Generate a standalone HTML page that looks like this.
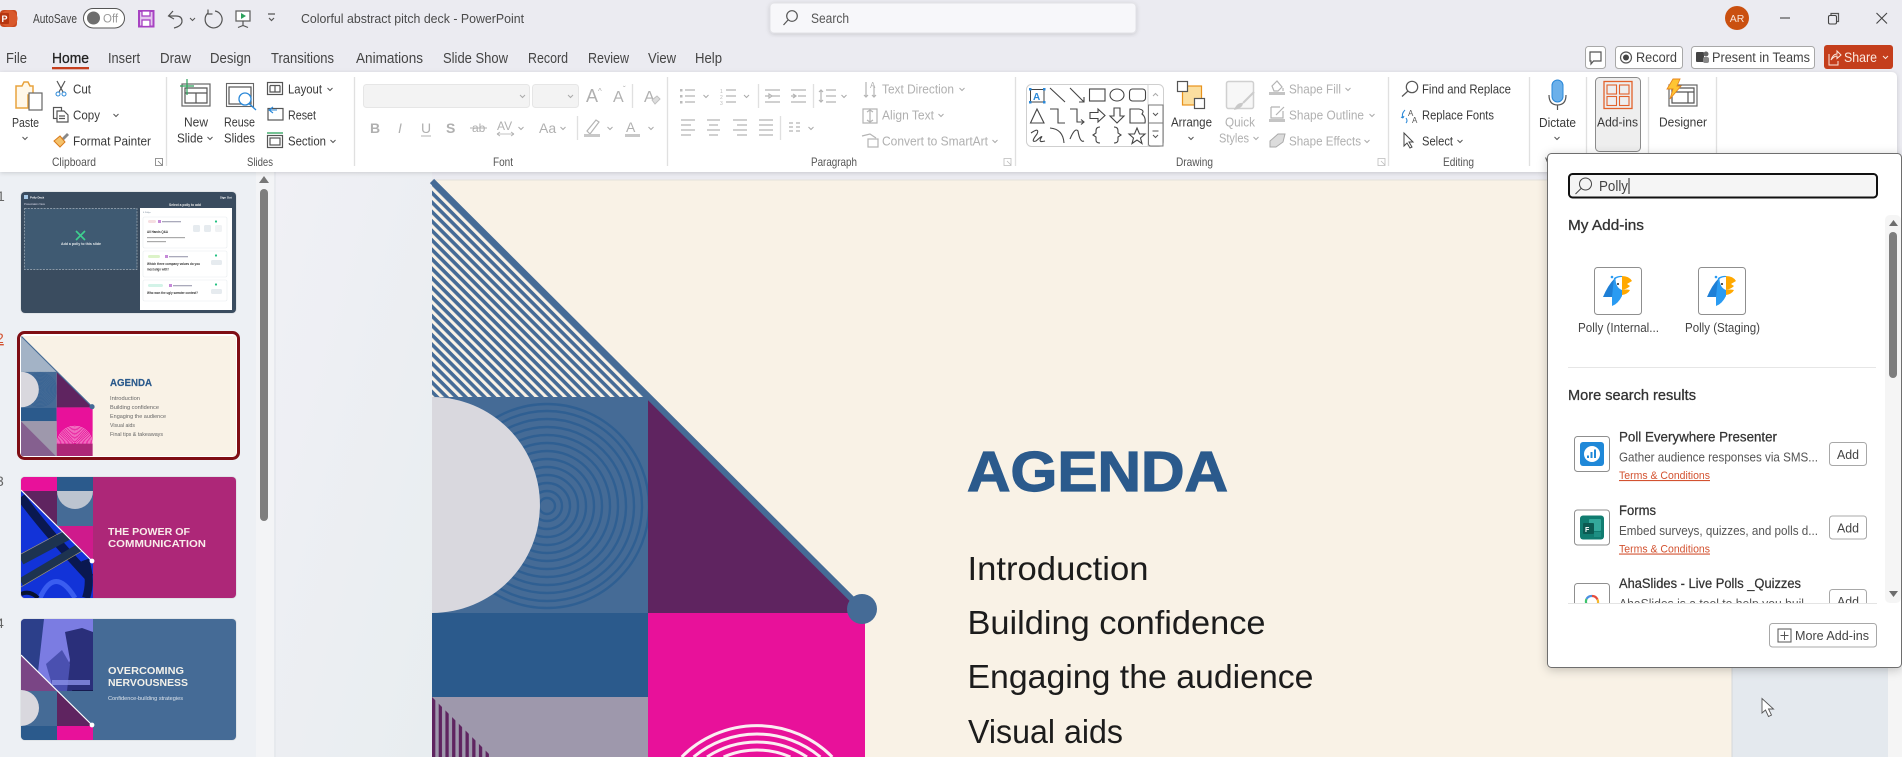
<!DOCTYPE html>
<html><head><meta charset="utf-8"><title>Colorful abstract pitch deck - PowerPoint</title>
<style>
html,body{margin:0;padding:0;width:1902px;height:757px;overflow:hidden;background:#ebebf1}
svg{display:block;font-family:"Liberation Sans",sans-serif}
.t{font-size:13px;fill:#3a3a3a}
.d{font-size:13px;fill:#b0b0b0}
.s{font-size:12px;fill:#555}
.tab{font-size:14.5px;fill:#444}
.i{fill:none;stroke:#555;stroke-width:1.2}
.g{fill:none;stroke:#b4b4b4;stroke-width:1.2}
.sh{fill:none;stroke:#444;stroke-width:1.1}
.ch{fill:none;stroke:#555;stroke-width:1}
.cg{fill:none;stroke:#aaa;stroke-width:1}
.sep{stroke:#e0e0e0;stroke-width:1.3}
.p{font-size:13px;fill:#444}
.pb{font-size:15px;fill:#333;stroke:#333;stroke-width:.3}
.rt{font-size:13.5px;fill:#333;stroke:#333;stroke-width:.25}
.btn{fill:#fff;stroke:#a8a8a8;stroke-width:1}
</style></head><body>
<svg width="1902" height="757" viewBox="0 0 1902 757" xmlns="http://www.w3.org/2000/svg">
<defs>
<linearGradient id="bgl" x1="0" x2="1" y1="0" y2="1"><stop offset="0" stop-color="#f0f0f5"/><stop offset="1" stop-color="#e8edf0"/></linearGradient>
<pattern id="hatch" patternUnits="userSpaceOnUse" width="6.7" height="6.7" patternTransform="rotate(45 432 181)"><rect width="6.7" height="6.7" fill="#f9f2e6"/><rect width="6.7" height="3.6" fill="#456b96"/></pattern>
<pattern id="vst" patternUnits="userSpaceOnUse" x="432" y="0" width="6.7" height="10"><rect width="6.7" height="10" fill="#9e98ac"/><rect width="3.3" height="10" fill="#5f2460"/></pattern>
<clipPath id="blueclip"><rect x="432" y="397" width="216" height="216"/></clipPath>
<clipPath id="magclip"><rect x="648" y="613" width="216" height="220"/></clipPath>
<clipPath id="th1"><rect x="21" y="192" width="215" height="121" rx="4"/></clipPath>
<clipPath id="th2"><rect x="21" y="336" width="215" height="120" rx="2"/></clipPath>
<clipPath id="th3"><rect x="21" y="477" width="215" height="121" rx="4"/></clipPath>
<clipPath id="th3i"><polygon points="21,490 93,561 93,598 21,598"/></clipPath>
<clipPath id="th4"><rect x="21" y="619" width="215" height="121" rx="4"/></clipPath>
<clipPath id="list"><rect x="1560" y="410" width="322" height="193"/></clipPath>
<filter id="sd" x="-10%" y="-10%" width="120%" height="120%"><feDropShadow dx="0" dy="2" stdDeviation="5" flood-color="#000" flood-opacity=".22"/></filter>
<filter id="sd2" x="-2%" y="-10%" width="104%" height="125%"><feDropShadow dx="0" dy="1" stdDeviation="2" flood-color="#000" flood-opacity=".15"/></filter>
<g id="art">
<polygon points="432,181 648,397 432,397" fill="url(#hatch)"/>
<rect x="432" y="397" width="216" height="216" fill="#456b96"/>
<g clip-path="url(#blueclip)" fill="none" stroke="#2f5f92" stroke-width="2.4">
<circle cx="547" cy="506" r="8"/><circle cx="547" cy="506" r="15"/><circle cx="547" cy="506" r="23"/><circle cx="547" cy="506" r="31"/><circle cx="547" cy="506" r="39"/><circle cx="547" cy="506" r="47"/><circle cx="547" cy="506" r="55"/><circle cx="547" cy="506" r="63"/><circle cx="547" cy="506" r="71"/><circle cx="547" cy="506" r="79"/><circle cx="547" cy="506" r="87"/><circle cx="547" cy="506" r="95"/><circle cx="547" cy="506" r="102"/>
</g>
<path d="M432 397A108 108 0 0 1 432 613Z" fill="#d9d8de"/>
<polygon points="648,397 862,611 648,613" fill="#5f2460"/>
<rect x="648" y="609" width="214" height="4" fill="#5f2460"/>
<rect x="432" y="613" width="216" height="84" fill="#2b5a8c"/>
<rect x="648" y="613" width="217" height="144" fill="#e8119a"/>
<rect x="432" y="697" width="216" height="60" fill="#9e98ac"/>
<polygon points="432,697 492,757 432,757" fill="url(#vst)"/>
<path d="M432 181L862 609" stroke="#456b96" stroke-width="6" fill="none"/>
<circle cx="862" cy="609" r="15" fill="#456b96"/>
</g>
<g id="art2">
<polygon points="432,181 648,397 432,397" fill="#a3b3c6"/>
<rect x="648" y="620" width="217" height="300" fill="#e8119a"/>
<g clip-path="url(#magclip)" fill="none" stroke="#f9cfe6" stroke-width="3">
<circle cx="757" cy="833" r="107"/><circle cx="757" cy="833" r="99"/><circle cx="757" cy="833" r="91"/><circle cx="757" cy="833" r="83"/><circle cx="757" cy="833" r="75"/><circle cx="757" cy="833" r="67"/><circle cx="757" cy="833" r="59"/><circle cx="757" cy="833" r="51"/><circle cx="757" cy="833" r="43"/><circle cx="757" cy="833" r="35"/><circle cx="757" cy="833" r="27"/><circle cx="757" cy="833" r="19"/><circle cx="757" cy="833" r="11"/>
</g>
<rect x="648" y="833" width="217" height="90" fill="#ad2778"/>
<rect x="432" y="697" width="216" height="226" fill="#9e98ac"/>
<polygon points="432,697 648,913 432,913" fill="#85608f"/>
<path d="M432 181L862 609" stroke="#456b96" stroke-width="6" fill="none"/>
<circle cx="862" cy="609" r="15" fill="#456b96"/>
</g>
<g id="parrot">
<path d="M0 22Q5 10 12 3L12 22L9 22Z" fill="#1e7fd6"/>
<path d="M11 3Q15 .5 19 1L19 21Q15 29 9 31L9 22Z" fill="#2a9bf2"/>
<path d="M12.500 4Q15 2 19 2L19 15Q13 13 12.500 4Z" fill="#fff"/>
<path d="M19 1Q26 1 29 6L24 9L27 11Q24 14 19 15Z" fill="#ffa800"/>
<path d="M19 15Q23 14 27 15Q25 19 19 20Z" fill="#ffa800"/>
<circle cx="9" cy="2" r="1.3" fill="#2a9bf2"/>
<circle cx="15" cy="9" r="1" fill="#222"/>
</g>
</defs>

<rect width="1902" height="757" fill="#ebebf1"/>

<!-- workspace -->
<rect x="0" y="172" width="256" height="585" fill="#edf0f4"/>
<rect x="256" y="172" width="18" height="585" fill="#f3f4f6"/>
<rect x="260" y="189" width="8" height="332" rx="4" fill="#7e7e7e"/>
<polygon points="264,176 259,183 269,183" fill="#777"/>
<rect x="274" y="172" width="158" height="585" fill="url(#bgl)"/>
<line x1="275" y1="172" x2="275" y2="757" stroke="#dfe3e8"/>
<rect x="432" y="180" width="1300" height="577" fill="#f9f2e6"/>
<rect x="1732" y="172" width="156" height="585" fill="#e4e9ee"/>
<rect x="1888" y="172" width="14" height="585" fill="#f5f5f5"/>
<line x1="432" y1="180" x2="1732" y2="180" stroke="#e4e1da"/>
<line x1="1732" y1="180" x2="1732" y2="757" stroke="#d5d8da"/>

<!-- main slide -->
<use href="#art"/>
<g fill="none" stroke="#fbeef2" stroke-width="3">
<path d="M681.700 757A106 106 0 0 1 832.300 757"/>
<path d="M693.600 757A99 99 0 0 1 820.400 757"/>
<path d="M707 757A91 91 0 0 1 807 757"/>
<path d="M723.600 757A83 83 0 0 1 790.400 757"/>
</g>
<text x="967" y="491" font-size="57" font-weight="bold" fill="#2b5a8c" stroke="#2b5a8c" stroke-width="1.2" textLength="261" lengthAdjust="spacingAndGlyphs">AGENDA</text>
<g font-size="33.500" fill="#1c1c1c">
<text x="967.500" y="580" textLength="181" lengthAdjust="spacingAndGlyphs">Introduction</text>
<text x="967.500" y="634" textLength="298" lengthAdjust="spacingAndGlyphs">Building confidence</text>
<text x="967.500" y="688" textLength="346" lengthAdjust="spacingAndGlyphs">Engaging the audience</text>
<text x="968" y="743" textLength="155" lengthAdjust="spacingAndGlyphs">Visual aids</text>
</g>

<!-- thumbnails -->
<g font-size="14" fill="#666">
<text x="-3" y="201">1</text>
<text x="-4" y="343" fill="#d35230" text-decoration="underline">2</text>
<text x="-4" y="486">3</text>
<text x="-4" y="628">4</text>
</g>
<!-- t1 -->
<rect x="20.500" y="191.500" width="216" height="122" rx="4" fill="#d4d7da"/>
<g clip-path="url(#th1)">
<rect x="21" y="192" width="215" height="121" fill="#3a4c5f"/>
<rect x="24.500" y="208.500" width="112.500" height="61" fill="#3f5a72" stroke="#a4b0bb" stroke-width=".7" stroke-dasharray="2 1.200"/>
<path d="M76 231L85 240M85 231L76 240" stroke="#3ed08f" stroke-width="1.600"/>
<text x="61" y="245" font-size="3.800" fill="#e4e8ea" font-weight="bold" textLength="40" lengthAdjust="spacingAndGlyphs">Add a polly to this slide</text>
<rect x="24" y="195" width="4" height="4" fill="#a6c8e6"/>
<text x="30" y="198.500" font-size="2.800" fill="#fff" font-weight="bold">Polly Deck</text>
<text x="220" y="198.500" font-size="2.800" fill="#fff" font-weight="bold">Sign Out</text>
<text x="24" y="205" font-size="2.600" fill="#dde">Presentation View</text>
<text x="185" y="206" font-size="3.300" fill="#e8e8e8" text-anchor="middle" font-weight="bold">Select a polly to add</text>
<rect x="140" y="208" width="92" height="102" fill="#fff"/>
<text x="143" y="213" font-size="2.200" fill="#789">6 Pollys</text>
<rect x="143" y="217" width="84" height="31" rx="1.500" fill="#fff" stroke="#e8ecef" stroke-width=".6"/>
<rect x="143" y="251" width="84" height="26" rx="1.500" fill="#fff" stroke="#e8ecef" stroke-width=".6"/>
<rect x="143" y="280" width="84" height="21" rx="1.500" fill="#fff" stroke="#e8ecef" stroke-width=".6"/>
<rect x="148" y="220" width="8" height="3" rx="1.500" fill="#f6dfe2"/><rect x="148" y="255" width="12" height="3" rx="1.500" fill="#dcf3c8"/><rect x="148" y="284" width="15" height="3" rx="1.500" fill="#d3f3e8"/>
<rect x="158" y="220" width="3" height="3" fill="#c58ad8"/><rect x="165" y="255" width="3" height="3" fill="#c58ad8"/><rect x="169" y="284" width="3" height="3" fill="#c58ad8"/>
<rect x="162" y="221" width="19" height="1.300" fill="#aab"/><rect x="169" y="256" width="19" height="1.300" fill="#aab"/><rect x="173" y="285" width="19" height="1.300" fill="#aab"/>
<circle cx="216" cy="221.500" r="1.100" fill="#20c080"/><circle cx="216" cy="255.500" r="1.100" fill="#20c080"/><circle cx="216" cy="284.500" r="1.100" fill="#20c080"/>
<rect x="193" y="225" width="7" height="7" rx="1.500" fill="#e6ebef"/><rect x="204" y="225" width="7" height="7" rx="1.500" fill="#e6ebef"/><rect x="215" y="225" width="7" height="7" rx="1.500" fill="#f0f2f4"/>
<rect x="211" y="260" width="11" height="5" rx="1.500" fill="#e6ebef"/><rect x="211" y="289" width="11" height="5" rx="1.500" fill="#e6ebef"/>
<text x="147" y="233" font-size="3.200" fill="#333" font-weight="bold" textLength="21" lengthAdjust="spacingAndGlyphs">All Hands Q&amp;A</text>
<rect x="147" y="237" width="38" height="1.200" fill="#aaa"/><rect x="147" y="241" width="19" height="1.200" fill="#aaa"/>
<text x="147" y="265" font-size="3.200" fill="#333" font-weight="bold" textLength="53" lengthAdjust="spacingAndGlyphs">Which three company values do you</text>
<text x="147" y="270.500" font-size="3.200" fill="#333" font-weight="bold" textLength="22" lengthAdjust="spacingAndGlyphs">most align with?</text>
<text x="147" y="294" font-size="3.200" fill="#333" font-weight="bold" textLength="51" lengthAdjust="spacingAndGlyphs">Who won the ugly sweater contest?</text>
</g>
<!-- t2 -->
<rect x="18.500" y="332.500" width="220" height="126" rx="6" fill="#fff" stroke="#7f0e14" stroke-width="3"/>
<g clip-path="url(#th2)">
<rect x="21" y="336" width="215" height="120" fill="#f9f2e6"/>
<g transform="translate(21 336) scale(.1653) translate(-432 -181)"><use href="#art"/><use href="#art2"/></g>
</g>
<text x="110" y="386" font-size="10" font-weight="bold" fill="#2b5a8c" stroke="#2b5a8c" stroke-width=".2" textLength="42" lengthAdjust="spacingAndGlyphs">AGENDA</text>
<g font-size="5.800" fill="#666">
<text x="110" y="400" textLength="30" lengthAdjust="spacingAndGlyphs">Introduction</text>
<text x="110" y="409" textLength="49" lengthAdjust="spacingAndGlyphs">Building confidence</text>
<text x="110" y="418" textLength="56" lengthAdjust="spacingAndGlyphs">Engaging the audience</text>
<text x="110" y="427" textLength="25" lengthAdjust="spacingAndGlyphs">Visual aids</text>
<text x="110" y="436" textLength="53" lengthAdjust="spacingAndGlyphs">Final tips &amp; takeaways</text>
</g>
<!-- t3 -->
<rect x="20.500" y="476.500" width="216" height="122" rx="4" fill="#d4d7da"/>
<g clip-path="url(#th3)">
<rect x="21" y="477" width="215" height="121" fill="#ad2778"/>
<rect x="21" y="477" width="36" height="14" fill="#e8119a"/>
<rect x="57" y="477" width="36" height="14" fill="#2b5a8c"/>
<rect x="21" y="491" width="36" height="36" fill="#5f2460"/>
<rect x="57" y="491" width="36" height="35" fill="#456b96"/>
<path d="M57 491A18 18 0 0 0 93 491Z" fill="#bcc4d0"/>
<polygon points="57,526 93,526 93,561" fill="#cf1a8c"/>
<polygon points="21,490 93,561 93,598 21,598" fill="#1233d8"/>
<g clip-path="url(#th3i)" fill="none">
<path d="M21 497Q45 530 90 578" stroke="#0a1850" stroke-width="9"/>
<path d="M85 560Q92 580 86 598" stroke="#0a1850" stroke-width="8"/>
<path d="M21 560L85 526" stroke="#1d3350" stroke-width="10"/>
<path d="M21 582L82 546" stroke="#1d3350" stroke-width="8"/>
<path d="M21 554L80 522M21 587L82 551" stroke="#b0a060" stroke-width=".6"/>
<path d="M40 598Q55 565 75 598" stroke="#3a5df0" stroke-width="5"/>
<path d="M21 594Q30 590 38 598" stroke="#07122f" stroke-width="4"/>
</g>
<path d="M21 490L92 561" stroke="#fff" stroke-width="1.200"/>
<circle cx="92" cy="561" r="2.400" fill="#fff"/>
</g>
<g font-size="10.500" font-weight="bold" fill="#f9ecea">
<text x="108" y="535" textLength="82" lengthAdjust="spacingAndGlyphs">THE POWER OF</text>
<text x="108" y="547" textLength="98" lengthAdjust="spacingAndGlyphs">COMMUNICATION</text>
</g>
<!-- t4 -->
<rect x="20.500" y="618.500" width="216" height="122" rx="4" fill="#d4d7da"/>
<g clip-path="url(#th4)">
<rect x="21" y="619" width="215" height="121" fill="#456b96"/>
<polygon points="21,619 93,619 93,726 21,655" fill="#7b7ce2"/>
<polygon points="21,619 44,619 38,672 21,655" fill="#2c3f8a"/>
<polygon points="65,632 82,628 93,632 93,726 62,695 70,660" fill="#2a2f7a"/>
<polygon points="46,664 62,650 70,664 66,700 52,685" fill="#4a50b0"/>
<rect x="52" y="680" width="38" height="5" fill="#8a90e8" opacity=".8"/>
<polygon points="72,690 93,690 93,726 78,711" fill="#161a50"/>
<polygon points="21,655 57,691 21,691" fill="#7a4585"/>
<rect x="21" y="691" width="36" height="35" fill="#456b96"/>
<rect x="57" y="691" width="36" height="35" fill="#456b96"/>
<polygon points="57,691 93,726 57,726" fill="#5f2460"/>
<path d="M21 690A18 18 0 0 1 21 726Z" fill="#d9d8de"/>
<rect x="21" y="726" width="36" height="14" fill="#2b5a8c"/>
<rect x="57" y="726" width="36" height="14" fill="#e8119a"/>
<path d="M21 655L92 725" stroke="#fff" stroke-width="1.200"/>
<circle cx="92" cy="725" r="2.400" fill="#fff"/>
</g>
<g font-size="10.500" font-weight="bold" fill="#f3f1ea">
<text x="108" y="674" textLength="76" lengthAdjust="spacingAndGlyphs">OVERCOMING</text>
<text x="108" y="686" textLength="80" lengthAdjust="spacingAndGlyphs">NERVOUSNESS</text>
</g>
<text x="108" y="700" font-size="5.200" fill="#dfe5ec" textLength="75" lengthAdjust="spacingAndGlyphs">Confidence-building strategies</text>

<!-- title bar -->
<path d="M4 10H14Q17 10 17 14V23Q17 27 14 27H4Q0 27 0 23V14Q0 10 4 10Z" fill="#c9471d"/>
<circle cx="9" cy="18.500" r="8.500" fill="#d9582b"/>
<rect x="0" y="13" width="9" height="11" rx="1" fill="#b7350f"/>
<text x="1.500" y="22" font-size="9" font-weight="bold" fill="#fff">P</text>
<text x="33" y="23" font-size="12.500" fill="#444" textLength="44" lengthAdjust="spacingAndGlyphs">AutoSave</text>
<rect x="83.500" y="8.500" width="41" height="19.500" rx="9.700" fill="#fff" stroke="#555" stroke-width="1"/>
<circle cx="93.500" cy="18" r="6.500" fill="#6e6e6e"/>
<text x="103" y="22.500" font-size="11.500" fill="#9a9a9a">Off</text>
<g fill="none" stroke="#a742c2" stroke-width="2">
<rect x="139" y="11" width="14.500" height="15.500" fill="#e4c6ee"/>
<rect x="142" y="11" width="8" height="5" fill="#fff" stroke-width="1.300"/>
<rect x="142" y="20" width="8" height="6.500" fill="#fff" stroke-width="1.300"/>
</g>
<path d="M173 11L168.500 16L174 19M169 16H176Q182 16 182 21Q182 26 174 28" fill="none" stroke="#555" stroke-width="1.200"/>
<path d="M190 18l2.500 2.500 2.500-2.500" class="ch"/>
<path d="M215 11A8.500 8.500 0 1 1 208 13M208 9.500L208 14L212.500 14" fill="none" stroke="#555" stroke-width="1.200"/>
<rect x="236" y="11" width="14" height="10" fill="#fff" stroke="#666" stroke-width="1.300"/>
<polygon points="241,13 241,19 246,16" fill="#2ba15b"/>
<path d="M243 21V26M238 27.500L243 25.500L248 27.500" class="i"/>
<path d="M268 14H275M269 18l2.500 2.500 2.500-2.500" class="i"/>
<text x="301" y="23" font-size="13" fill="#4a4a4a" textLength="223" lengthAdjust="spacingAndGlyphs">Colorful abstract pitch deck  -  PowerPoint</text>
<rect x="770" y="3" width="366" height="30" rx="4" fill="#f7f7fa" stroke="#e2e2e6" filter="url(#sd2)"/>
<circle cx="792" cy="16" r="5.300" class="i"/><path d="M788 20L783.500 25" class="i"/>
<text x="811" y="23" font-size="13.500" fill="#555" textLength="38" lengthAdjust="spacingAndGlyphs">Search</text>
<circle cx="1737" cy="18" r="12" fill="#ca5010"/>
<text x="1737" y="22" font-size="10.500" fill="#f8e4d8" text-anchor="middle">AR</text>
<path d="M1780 18H1790" stroke="#444" stroke-width="1.100"/>
<rect x="1828.500" y="15.500" width="8" height="8.500" rx="1.500" fill="none" stroke="#444" stroke-width="1.100"/><path d="M1831 15V13.500H1838.500V21.500H1836.800" class="i"/>
<path d="M1876.500 13L1887 23.500M1887 13L1876.500 23.500" stroke="#444" stroke-width="1.100"/>

<!-- tabs -->
<text class="tab" x="6" y="63" textLength="21" lengthAdjust="spacingAndGlyphs">File</text>
<text class="tab" x="52" y="63" textLength="37" lengthAdjust="spacingAndGlyphs" style="fill:#222;stroke:#222;stroke-width:.3">Home</text>
<text class="tab" x="108" y="63" textLength="32" lengthAdjust="spacingAndGlyphs">Insert</text>
<text class="tab" x="160" y="63" textLength="31" lengthAdjust="spacingAndGlyphs">Draw</text>
<text class="tab" x="210" y="63" textLength="41" lengthAdjust="spacingAndGlyphs">Design</text>
<text class="tab" x="271" y="63" textLength="63" lengthAdjust="spacingAndGlyphs">Transitions</text>
<text class="tab" x="356" y="63" textLength="67" lengthAdjust="spacingAndGlyphs">Animations</text>
<text class="tab" x="443" y="63" textLength="65" lengthAdjust="spacingAndGlyphs">Slide Show</text>
<text class="tab" x="528" y="63" textLength="40" lengthAdjust="spacingAndGlyphs">Record</text>
<text class="tab" x="588" y="63" textLength="41" lengthAdjust="spacingAndGlyphs">Review</text>
<text class="tab" x="648" y="63" textLength="28" lengthAdjust="spacingAndGlyphs">View</text>
<text class="tab" x="695" y="63" textLength="27" lengthAdjust="spacingAndGlyphs">Help</text>
<rect x="52" y="67" width="37" height="2.300" fill="#c43e1c"/>

<!-- top-right buttons -->
<rect x="1585.500" y="46.500" width="20" height="22" rx="3" class="btn"/>
<path d="M1590 52H1601V61H1593.500L1591 64V61H1590Z" class="i"/>
<rect x="1615.500" y="46.500" width="67" height="22" rx="3" class="btn"/>
<circle cx="1626" cy="57.500" r="5.500" class="i"/><circle cx="1626" cy="57.500" r="3" fill="#444"/>
<text x="1636" y="62" font-size="13.500" fill="#444" textLength="41" lengthAdjust="spacingAndGlyphs">Record</text>
<rect x="1691.500" y="46.500" width="123" height="22" rx="3" class="btn"/>
<rect x="1696" y="52" width="8" height="10" rx="1" fill="#444"/><circle cx="1706" cy="54" r="2.500" fill="#666"/><rect x="1703" y="57" width="6" height="6" rx="2" fill="#888"/>
<text x="1712" y="62" font-size="13.500" fill="#444" textLength="98" lengthAdjust="spacingAndGlyphs">Present in Teams</text>
<rect x="1824" y="45" width="69" height="24" rx="3" fill="#c43e1c"/>
<path d="M1829 54V65H1838V61M1831 60Q1833 54 1837 54V51L1841 55L1837 58.500V56Q1834 56 1831 60Z" fill="none" stroke="#fbe6dc" stroke-width="1"/>
<text x="1844" y="62" font-size="14" fill="#fbe9e0" textLength="33" lengthAdjust="spacingAndGlyphs">Share</text>
<path d="M1883 56l2.500 2.500 2.500-2.500" fill="none" stroke="#fbe9e0" stroke-width="1"/>

<!-- ribbon -->
<path d="M0 72H1891Q1897 72 1897 78V166Q1897 172 1891 172H0Z" fill="#fff" filter="url(#sd2)"/>
<line class="sep" x1="166.500" y1="77" x2="166.500" y2="166"/>
<line class="sep" x1="354.500" y1="77" x2="354.500" y2="166"/>
<line class="sep" x1="632.500" y1="84" x2="632.500" y2="108"/>
<line class="sep" x1="667.500" y1="77" x2="667.500" y2="166"/>
<line class="sep" x1="577.500" y1="116" x2="577.500" y2="140"/>
<line class="sep" x1="758.500" y1="84" x2="758.500" y2="108"/>
<line class="sep" x1="813.500" y1="84" x2="813.500" y2="108"/>
<line class="sep" x1="780.500" y1="116" x2="780.500" y2="140"/>
<line class="sep" x1="1015.500" y1="77" x2="1015.500" y2="166"/>
<line class="sep" x1="1388.500" y1="77" x2="1388.500" y2="166"/>
<line class="sep" x1="1529.500" y1="77" x2="1529.500" y2="166"/>
<line class="sep" x1="1586.500" y1="77" x2="1586.500" y2="166"/>
<line class="sep" x1="1648.500" y1="77" x2="1648.500" y2="166"/>
<line class="sep" x1="1716.500" y1="77" x2="1716.500" y2="166"/>

<!-- clipboard -->
<path d="M16 86H22L24 82H28L30 86H33V95H28V108H16Z" fill="#fff8ea" stroke="#e8a33d" stroke-width="1.500"/>
<rect x="29" y="93" width="13" height="17" fill="#fff" stroke="#666" stroke-width="1.200"/>
<text x="12" y="127" class="t" textLength="27" lengthAdjust="spacingAndGlyphs">Paste</text>
<path d="M22.500 137l2.500 2.500 2.500-2.500" class="ch"/>
<path d="M57 81L63 92M65 81L59 92" class="i"/><circle cx="58" cy="94" r="2" fill="none" stroke="#2a88d8"/><circle cx="64" cy="94" r="2" fill="none" stroke="#2a88d8"/>
<text x="73" y="93.500" class="t" textLength="18" lengthAdjust="spacingAndGlyphs">Cut</text>
<rect x="53.500" y="107.500" width="8" height="11" class="i"/><path d="M57 111H64L68 115V122H57Z" fill="#fff" stroke="#555" stroke-width="1.200"/><path d="M59 116H65M59 118.500H65" class="i" stroke-width=".8"/>
<text x="73" y="119.500" class="t" textLength="27" lengthAdjust="spacingAndGlyphs">Copy</text>
<path d="M113.500 114l2.500 2.500 2.500-2.500" class="ch"/>
<path d="M62 138L67 133L69 135L64 140Z" fill="#888"/><path d="M54 141L60 136L65 142L60 147Z" fill="#f4c26b" stroke="#d97a1b"/>
<text x="73" y="145.500" class="t" textLength="78" lengthAdjust="spacingAndGlyphs">Format Painter</text>
<text x="52" y="166" class="s" textLength="44" lengthAdjust="spacingAndGlyphs">Clipboard</text>
<path d="M155.500 158.500H162.500V165.500H155.500ZM158 161L162 165" fill="none" stroke="#777" stroke-width=".8"/>

<!-- slides -->
<rect x="182" y="84" width="28" height="22" fill="#fff" stroke="#666" stroke-width="1.200"/>
<path d="M185 88H207V103H185ZM196 93V103M185 93H207" class="i"/>
<path d="M187 79V95M180 86H194" stroke="#2ba15b" stroke-width="1.200" fill="none"/>
<text x="184" y="126.500" class="t" textLength="24" lengthAdjust="spacingAndGlyphs">New</text>
<text x="177" y="142.500" class="t" textLength="26" lengthAdjust="spacingAndGlyphs">Slide</text>
<path d="M207.500 137l2.500 2.500 2.500-2.500" class="ch"/>
<rect x="226.500" y="83.500" width="27" height="23" fill="#fff" stroke="#666" stroke-width="1.100"/>
<rect x="229" y="87" width="22" height="17" class="i"/>
<circle cx="245" cy="99" r="6" fill="#fff" stroke="#2a88d8" stroke-width="1.300"/><path d="M249 103.500L256 110" stroke="#2a88d8" stroke-width="1.300"/>
<text x="224" y="126.500" class="t" textLength="31" lengthAdjust="spacingAndGlyphs">Reuse</text>
<text x="224" y="142.500" class="t" textLength="31" lengthAdjust="spacingAndGlyphs">Slides</text>
<rect x="267.500" y="82.500" width="15" height="12" class="i"/><path d="M270 85.500H280M270 85.500V92H280V85.500M275 85.500V92" class="i" stroke-width=".8"/>
<text x="288" y="93.500" class="t" textLength="34" lengthAdjust="spacingAndGlyphs">Layout</text>
<path d="M327.500 88l2.500 2.500 2.500-2.500" class="ch"/>
<rect x="268" y="108.500" width="15" height="11.500" class="i"/><path d="M273 107L269 110L273 113M269 110H277" fill="none" stroke="#2a88d8" stroke-width="1.100"/>
<text x="288" y="119.500" class="t" textLength="28" lengthAdjust="spacingAndGlyphs">Reset</text>
<rect x="267.500" y="135.500" width="15" height="12" class="i"/><rect x="270" y="138" width="10" height="7" class="i" stroke-width=".8"/><path d="M267 133H283" stroke="#2ba15b" stroke-width="1.300"/>
<text x="288" y="145.500" class="t" textLength="38" lengthAdjust="spacingAndGlyphs">Section</text>
<path d="M330.500 140l2.500 2.500 2.500-2.500" class="ch"/>
<text x="247" y="166" class="s" textLength="26" lengthAdjust="spacingAndGlyphs">Slides</text>

<!-- font -->
<rect x="363.500" y="84.500" width="166" height="23" rx="3" fill="#f3f3f3" stroke="#e6e6e6"/>
<rect x="532.500" y="84.500" width="46" height="23" rx="3" fill="#f3f3f3" stroke="#e6e6e6"/>
<path d="M520 95l2.500 2.500 2.500-2.500M568 95l2.500 2.500 2.500-2.500" class="cg"/>
<g fill="#b0b0b0">
<text x="586" y="102" font-size="18">A</text><text x="613" y="102" font-size="16">A</text>
<text x="598" y="94" font-size="8">^</text><text x="623" y="92" font-size="8">ˇ</text>
<text x="644" y="102" font-size="16">A</text>
</g>
<path d="M652 100L657 96L660 99L655 104Z" fill="#ddd" stroke="#c0c0c0"/>
<g fill="#b0b0b0" font-size="14">
<text x="370" y="133" font-weight="bold">B</text>
<text x="398" y="133" font-style="italic">I</text>
<text x="421" y="133">U</text><path d="M421 136H431" stroke="#b0b0b0"/>
<text x="446" y="133" font-weight="bold">S</text>
<text x="472" y="132" font-size="12">ab</text><path d="M470 128H487" stroke="#b0b0b0"/>
<text x="497" y="130" font-size="12">AV</text><path d="M497 134H514M497 134l3-2M497 134l3 2M514 134l-3-2M514 134l-3 2" stroke="#b0b0b0" stroke-width=".8" fill="none"/>
<text x="539" y="133">Aa</text>
</g>
<path d="M518.500 127l2.500 2.500 2.500-2.500M560.500 127l2.500 2.500 2.500-2.500M607.500 127l2.500 2.500 2.500-2.500M648.500 127l2.500 2.500 2.500-2.500" class="cg"/>
<path d="M587 131L596 120L599 122L590 134Z" class="g"/><rect x="584" y="134" width="16" height="3" fill="#c8c8c8"/>
<text x="626" y="132" font-size="14" fill="#b0b0b0">A</text><rect x="625" y="134" width="15" height="3" fill="#c8c8c8"/>
<text x="493" y="166" class="s" textLength="20" lengthAdjust="spacingAndGlyphs">Font</text>

<!-- paragraph -->
<path class="g" d="M685 90H695M685 96H695M685 102H695M726 90H736M726 96H736M726 102H736M765 90H780M772 96H780M772 102H780M765 102H780M791 90H806M798 96H806M798 102H806M791 102H806M826 90H836M826 96H836M826 102H836"/>
<path class="g" d="M681 120H695M681 125H691M681 130H695M681 135H691M707 120H720M709 125H718M707 130H720M709 135H718M733 120H747M737 125H747M733 130H747M737 135H747M759 120H773M759 125H773M759 130H773M759 135H773"/>
<path class="g" d="M789 123H793M789 127H793M789 131H793M796 123H800M796 127H800M796 131H800"/>
<path class="g" d="M821 90V102M819 92l2-2 2 2M819 100l2 2 2-2"/>
<path class="g" d="M772 96l-3-2v4zM765 96H769M791 96h5M793 94l3 2-3 2"/>
<rect x="680" y="89" width="2.500" height="2.500" fill="#bbb"/><rect x="680" y="95" width="2.500" height="2.500" fill="#bbb"/><rect x="680" y="101" width="2.500" height="2.500" fill="#bbb"/>
<text x="720" y="93" font-size="5" fill="#bbb">1</text><text x="720" y="99" font-size="5" fill="#bbb">2</text><text x="720" y="105" font-size="5" fill="#bbb">3</text>
<path d="M703.500 95l2.500 2.500 2.500-2.500M744 95l2.500 2.500 2.500-2.500M841.500 95l2.500 2.500 2.500-2.500M808.500 127l2.500 2.500 2.500-2.500" class="cg"/>
<path d="M866 82V97M864 95l2 2 2-2M874 86V97M872 95l2 2 2-2" class="g"/><text x="870" y="88" font-size="8" fill="#b0b0b0">A</text>
<text x="882" y="93.500" class="d" textLength="72" lengthAdjust="spacingAndGlyphs">Text Direction</text>
<path d="M959.500 88l2.500 2.500 2.500-2.500" class="cg"/>
<path d="M863 109H877V123H863ZM870 109V123M867 112l3-2 3 2M867 120l3 2 3-2" class="g"/>
<text x="882" y="119.500" class="d" textLength="52" lengthAdjust="spacingAndGlyphs">Align Text</text>
<path d="M938.500 114l2.500 2.500 2.500-2.500" class="cg"/>
<path d="M862 136L870 134L876 138" class="g"/><rect x="868" y="139" width="10" height="8" class="g"/>
<text x="882" y="145.500" class="d" textLength="106" lengthAdjust="spacingAndGlyphs">Convert to SmartArt</text>
<path d="M992.500 140l2.500 2.500 2.500-2.500" class="cg"/>
<text x="811" y="166" class="s" textLength="46" lengthAdjust="spacingAndGlyphs">Paragraph</text>
<path d="M1004 158.500H1011V165.500H1004ZM1007 161L1011 165" fill="none" stroke="#bbb" stroke-width=".8"/>

<!-- drawing gallery -->
<rect x="1026.500" y="84.500" width="137" height="62" rx="5" fill="#fff" stroke="#cfcfcf"/>
<rect x="1030.500" y="89.500" width="13.500" height="12.500" fill="#fff" stroke="#444"/>
<g fill="#2a88d8"><rect x="1029" y="88" width="2.500" height="2.500"/><rect x="1043" y="88" width="2.500" height="2.500"/><rect x="1029" y="101" width="2.500" height="2.500"/><rect x="1043" y="101" width="2.500" height="2.500"/></g>
<text x="1033" y="100" font-size="10" fill="#2a88d8" font-weight="bold">A</text>
<path class="sh" d="M1050 88L1065 102M1070 88L1084 102M1084 97V102H1079"/>
<rect class="sh" x="1089.500" y="89" width="15.500" height="12"/>
<ellipse class="sh" cx="1117" cy="95" rx="7" ry="6"/>
<rect class="sh" x="1129.500" y="89" width="16" height="12" rx="3"/>
<path class="sh" d="M1037 109L1030.500 123H1044ZM1050 109H1058V123H1065M1070 109H1077V122H1084M1081 119.500l3 2.500-3 2.500M1090 112.500H1098V109L1105 115.500L1098 122V118.500H1090ZM1114 108H1120V116H1124L1117 123L1110 116H1114ZM1130 123V109H1139Q1145 110 1142 114Q1146 117 1145 123Z"/>
<path class="sh" d="M1031 133Q1040 127 1037 134Q1030 143 1036 141Q1044 134 1041 138Q1038 143 1045 141M1050 128Q1063 129 1064 143M1070 139Q1075 127 1078 131Q1080 143 1084 141M1100 127Q1096 127 1096 131V133L1093 135L1096 137V140Q1096 143 1100 143M1114 127Q1118 127 1118 131V133L1121 135L1118 137V140Q1118 143 1114 143M1137 128L1139.500 134L1145 134L1140.500 138L1142 143.500L1137 140L1132 143.500L1133.500 138L1129 134L1134.500 134Z"/>
<path d="M1148 84.500V146.500" stroke="#d5d5d5"/>
<rect x="1148.500" y="105" width="14.500" height="18" fill="#fff" stroke="#777"/>
<path d="M1148.500 123H1163V146H1151Q1148.500 146 1148.500 144Z" fill="#fff" stroke="#777"/>
<path d="M1153 96l2.500-2.500 2.500 2.500" class="cg"/>
<path d="M1153 113l2.500 2.500 2.500-2.500" class="ch"/>
<path d="M1152.500 131H1158.500M1153 135l2.500 2.500 2.500-2.500" class="ch"/>
<rect x="1182.500" y="86" width="19" height="19" fill="#fbdfa0" stroke="#e8921c" stroke-width="1.200"/>
<rect x="1177.500" y="81.500" width="10" height="10" fill="#fff" stroke="#555" stroke-width="1.200"/>
<rect x="1194.500" y="98.500" width="10" height="10" fill="#fff" stroke="#555" stroke-width="1.200"/>
<text x="1171" y="126.500" class="t" textLength="41" lengthAdjust="spacingAndGlyphs">Arrange</text>
<path d="M1188.500 137l2.500 2.500 2.500-2.500" class="ch"/>
<rect x="1226.500" y="81.500" width="27" height="27" rx="2" fill="#f7f7f7" stroke="#d0d0d0" stroke-width="1.500"/>
<path d="M1254 92L1243 103" stroke="#ccc" stroke-width="2"/><path d="M1234 110Q1237 102 1243 103Q1243 108 1234 110Z" fill="#c8c8c8"/>
<text x="1225" y="126.500" class="d" textLength="30" lengthAdjust="spacingAndGlyphs">Quick</text>
<text x="1219" y="142.500" class="d" textLength="30" lengthAdjust="spacingAndGlyphs">Styles</text>
<path d="M1253.500 137l2.500 2.500 2.500-2.500" class="cg"/>
<path d="M1272 86L1277 81L1282 87L1278 91H1274ZM1283 88V91" class="g"/><rect x="1269" y="92" width="16" height="3" fill="#c4c4c4"/>
<text x="1289" y="93.500" class="d" textLength="52" lengthAdjust="spacingAndGlyphs">Shape Fill</text>
<path d="M1345.500 88l2.500 2.500 2.500-2.500" class="cg"/>
<path d="M1271 107H1280M1271 107V118H1283V111M1276 115L1284 107" class="g"/><rect x="1269" y="119" width="16" height="3" fill="#c4c4c4"/>
<text x="1289" y="119.500" class="d" textLength="75" lengthAdjust="spacingAndGlyphs">Shape Outline</text>
<path d="M1369.500 114l2.500 2.500 2.500-2.500" class="cg"/>
<path d="M1270 141L1278 134H1285L1283 142L1276 147H1270Z" fill="#dcdcdc" stroke="#aaa"/>
<text x="1289" y="145.500" class="d" textLength="72" lengthAdjust="spacingAndGlyphs">Shape Effects</text>
<path d="M1364.500 140l2.500 2.500 2.500-2.500" class="cg"/>
<text x="1176" y="166" class="s" textLength="37" lengthAdjust="spacingAndGlyphs">Drawing</text>
<path d="M1378 158.500H1385V165.500H1378ZM1381 161L1385 165" fill="none" stroke="#bbb" stroke-width=".8"/>

<!-- editing -->
<circle cx="1412" cy="87" r="5.700" class="i"/><path d="M1408 91L1402 96.500" class="i"/>
<text x="1422" y="93.500" class="t" textLength="89" lengthAdjust="spacingAndGlyphs">Find and Replace</text>
<text x="1408" y="116" font-size="8" fill="#555">A</text><text x="1412" y="123" font-size="8" fill="#555">A</text>
<path d="M1405 110Q1401 114 1403 118M1403 118l-2-1M1403 118l1-2M1406 118Q1408 121 1406 123" fill="none" stroke="#2a88d8"/>
<text x="1422" y="119.500" class="t" textLength="72" lengthAdjust="spacingAndGlyphs">Replace Fonts</text>
<path d="M1404 133V146L1407 143L1410 148L1412 147L1409 142L1413 142Z" fill="#fff" stroke="#444"/>
<text x="1422" y="145.500" class="t" textLength="31" lengthAdjust="spacingAndGlyphs">Select</text>
<path d="M1457.500 140l2.500 2.500 2.500-2.500" class="ch"/>
<text x="1443" y="166" class="s" textLength="31" lengthAdjust="spacingAndGlyphs">Editing</text>

<!-- dictate -->
<rect x="1552" y="80" width="11" height="22" rx="5.500" fill="#6bb0ea" stroke="#2a88d8"/>
<path d="M1549 95Q1549 105 1557.500 105Q1566 105 1566 95M1557.500 105V110" class="i"/>
<text x="1539" y="127" class="t" textLength="37" lengthAdjust="spacingAndGlyphs">Dictate</text>
<path d="M1554.500 137l2.500 2.500 2.500-2.500" class="ch"/>
<text x="1545" y="166" class="s">V</text>

<!-- add-ins -->
<rect x="1595.500" y="77.500" width="45" height="74" rx="4" fill="#eeeeee" stroke="#8c8c8c"/>
<rect x="1604" y="81.500" width="28" height="27" fill="none" stroke="#e2622b" stroke-width="1.300"/>
<rect x="1607" y="85" width="9.500" height="9" fill="none" stroke="#e2622b" stroke-width="1.100"/>
<rect x="1619.500" y="85" width="9.500" height="9" fill="none" stroke="#e2622b" stroke-width="1.100"/>
<rect x="1607" y="96.500" width="9.500" height="9" fill="none" stroke="#e2622b" stroke-width="1.100"/>
<rect x="1619.500" y="96.500" width="9.500" height="9" fill="none" stroke="#e2622b" stroke-width="1.100"/>
<text x="1597" y="126.500" class="t" textLength="41" lengthAdjust="spacingAndGlyphs">Add-ins</text>

<!-- designer -->
<rect x="1669" y="85" width="28" height="21" fill="#fff" stroke="#666" stroke-width="1.200"/>
<path d="M1672 88H1694V103H1672ZM1672 92H1694M1688 92V103" class="i"/>
<path d="M1673 79H1680L1677 86H1681L1670 99L1673 89H1667Z" fill="#ffc533" stroke="#e8861c" stroke-width=".9"/>
<text x="1659" y="126.500" class="t" textLength="48" lengthAdjust="spacingAndGlyphs">Designer</text>

<!-- add-ins panel -->
<rect x="1547.500" y="153.500" width="354" height="514" rx="4" fill="#fff" stroke="#6e6e6e" filter="url(#sd)"/>
<rect x="1569" y="174" width="308" height="23.500" rx="3.500" fill="#f5f5f5" stroke="#111" stroke-width="2"/>
<circle cx="1585.500" cy="184" r="6" fill="none" stroke="#444"/><path d="M1581 188.500L1575.500 194" stroke="#444" fill="none"/>
<text x="1599" y="191" font-size="14.500" fill="#444" textLength="29" lengthAdjust="spacingAndGlyphs">Polly</text>
<path d="M1629 178V194" stroke="#222"/>
<text x="1568" y="230" class="pb" textLength="76" lengthAdjust="spacingAndGlyphs">My Add-ins</text>
<rect x="1594.500" y="267.500" width="47" height="47" rx="3" fill="#fff" stroke="#8f8f8f"/>
<rect x="1698.500" y="267.500" width="47" height="47" rx="3" fill="#fff" stroke="#8f8f8f"/>
<use href="#parrot" transform="translate(1603 275)"/>
<use href="#parrot" transform="translate(1707 275)"/>
<text x="1578" y="332" class="p" textLength="81" lengthAdjust="spacingAndGlyphs">Polly (Internal...</text>
<text x="1685" y="332" class="p" textLength="75" lengthAdjust="spacingAndGlyphs">Polly (Staging)</text>
<line x1="1568" y1="367.500" x2="1876" y2="367.500" stroke="#e6e6e6"/>
<text x="1568" y="400" class="pb" textLength="128" lengthAdjust="spacingAndGlyphs">More search results</text>
<rect x="1885" y="215" width="16" height="388" rx="5" fill="#f5f5f5"/>
<rect x="1889" y="232" width="8" height="146" rx="4" fill="#7e7e7e"/>
<polygon points="1893.500,220 1889,226 1898,226" fill="#6e6e6e"/>
<polygon points="1889,591 1898,591 1893.500,597" fill="#6e6e6e"/>

<g clip-path="url(#list)">
<rect x="1574.500" y="436.500" width="35" height="35" rx="3" fill="#fff" stroke="#8f8f8f"/>
<rect x="1580" y="442" width="24" height="24" rx="3" fill="#1f88d8"/>
<circle cx="1592" cy="454" r="8" fill="#fff"/>
<path d="M1588 455.500V458M1591.500 452V458M1595 449.500V458" stroke="#1f88d8" stroke-width="2"/>
<text x="1619" y="441.500" class="rt" textLength="158" lengthAdjust="spacingAndGlyphs">Poll Everywhere Presenter</text>
<text x="1619" y="461.500" font-size="12.500" fill="#555" textLength="199" lengthAdjust="spacingAndGlyphs">Gather audience responses via SMS...</text>
<text x="1619" y="479" font-size="11" fill="#d35230" text-decoration="underline" textLength="91" lengthAdjust="spacingAndGlyphs">Terms &amp; Conditions</text>
<rect x="1829.500" y="442.500" width="37" height="23" rx="3" class="btn"/>
<text x="1837" y="459" font-size="13" fill="#444" textLength="22" lengthAdjust="spacingAndGlyphs">Add</text>

<rect x="1574.500" y="510" width="35" height="35" rx="3" fill="#fff" stroke="#8f8f8f"/>
<rect x="1580" y="515.500" width="24" height="24" rx="3" fill="#107c70"/>
<rect x="1589" y="519" width="12" height="12" rx="1" fill="#33a89b"/><rect x="1583" y="523" width="11" height="11" rx="1" fill="#0b5a52"/>
<rect x="1594" y="532" width="7" height="5" fill="#1d8f83"/>
<text x="1585" y="532" font-size="7" fill="#fff" font-weight="bold">F</text>
<text x="1619" y="515" class="rt" textLength="37" lengthAdjust="spacingAndGlyphs">Forms</text>
<text x="1619" y="535" font-size="12.500" fill="#555" textLength="199" lengthAdjust="spacingAndGlyphs">Embed surveys, quizzes, and polls d...</text>
<text x="1619" y="552.500" font-size="11" fill="#d35230" text-decoration="underline" textLength="91" lengthAdjust="spacingAndGlyphs">Terms &amp; Conditions</text>
<rect x="1829.500" y="516" width="37" height="23" rx="3" class="btn"/>
<text x="1837" y="532.500" font-size="13" fill="#444" textLength="22" lengthAdjust="spacingAndGlyphs">Add</text>

<rect x="1574.500" y="583.500" width="35" height="35" rx="3" fill="#fff" stroke="#8f8f8f"/>
<path d="M1592 596a6 6 0 0 1 5.500 3.500" stroke="#e74c3c" stroke-width="2.200" fill="none"/>
<path d="M1586.500 599a6 6 0 0 1 5.500-3" stroke="#4a90e2" stroke-width="2.200" fill="none"/>
<path d="M1597.500 599.500a6 6 0 0 1 0 5" stroke="#f5b82e" stroke-width="2.200" fill="none"/>
<path d="M1586.500 599a6 6 0 0 0 0 5" stroke="#3ec46d" stroke-width="2.200" fill="none"/>
<text x="1619" y="588" class="rt" textLength="182" lengthAdjust="spacingAndGlyphs">AhaSlides - Live Polls _Quizzes</text>
<text x="1619" y="608" font-size="12.500" fill="#555" textLength="185" lengthAdjust="spacingAndGlyphs">AhaSlides is a tool to help you buil</text>
<rect x="1829.500" y="589.500" width="37" height="23" rx="3" class="btn"/>
<text x="1837" y="606" font-size="13" fill="#444" textLength="22" lengthAdjust="spacingAndGlyphs">Add</text>
</g>
<line x1="1568" y1="603.500" x2="1877" y2="603.500" stroke="#e4e4e4"/>
<rect x="1769.500" y="623.500" width="107" height="23.500" rx="3" class="btn"/>
<rect x="1778" y="629" width="13" height="13" fill="none" stroke="#555"/><path d="M1784.500 631.500V640M1780.500 635.500H1788.500" stroke="#555" fill="none"/>
<text x="1795" y="640" font-size="13" fill="#444" textLength="74" lengthAdjust="spacingAndGlyphs">More Add-ins</text>

<!-- cursor -->
<path d="M1762 698.500V713L1765.500 710L1768.500 716.500L1771.500 715L1768.500 709L1773.500 709Z" fill="#fff" stroke="#555" stroke-width=".9"/>
</svg>
</body></html>
